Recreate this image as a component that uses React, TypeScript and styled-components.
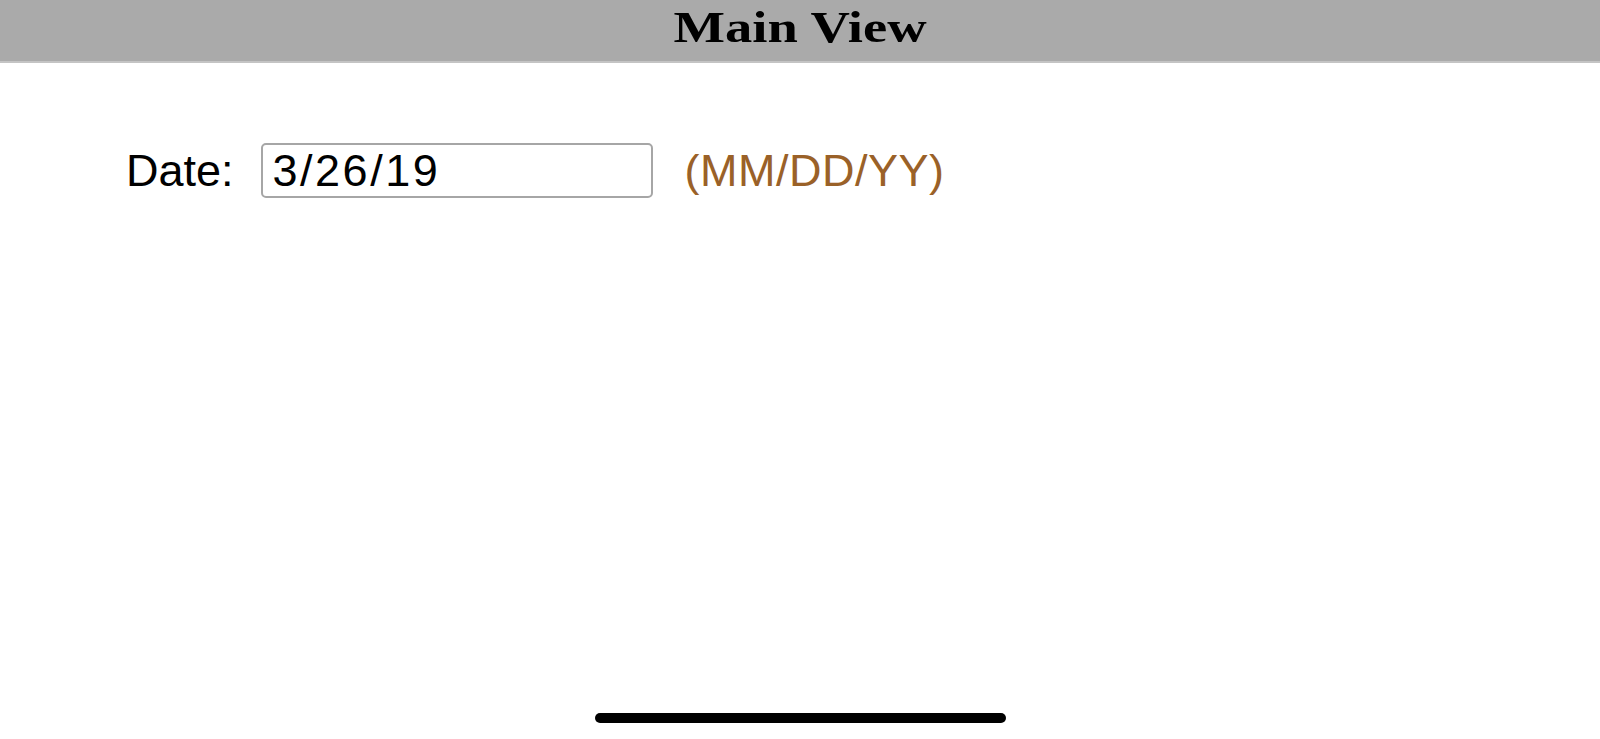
import React, { useState } from "react";
import styled, { createGlobalStyle } from "styled-components";

const GlobalStyle = createGlobalStyle`
  html, body {
    margin: 0;
    padding: 0;
    background: #ffffff;
  }
`;

function App() {
  const [date, setDate] = useState("3/26/19");

  return (
    <Screen>
      <GlobalStyle />
      <Header>
        <Title>Main View</Title>
      </Header>
      <Content>
        <Row>
          <Label htmlFor="date">Date:</Label>
          <DateInput
            id="date"
            value={date}
            onChange={(e) => setDate(e.target.value)}
          />
          <Hint>(MM/DD/YY)</Hint>
        </Row>
      </Content>
      <HomeIndicator />
    </Screen>
  );
}

const Screen = styled.div`
  width: 100%;
  height: 739px;
  display: flex;
  flex-direction: column;
  align-items: stretch;
  overflow: hidden;
`;

const Header = styled.div`
  height: 61px;
  background: #aaaaaa;
  border-bottom: 2px solid #c4c4c4;
  display: flex;
  justify-content: center;
  align-items: center;
`;

const Title = styled.h1`
  margin: 0;
  font-family: "Liberation Serif", "Times New Roman", serif;
  font-weight: 700;
  font-size: 44px;
  line-height: 61px;
  color: #000000;
  transform: scaleX(1.24);
  position: relative;
  top: -3px;
`;

const Content = styled.div`
  flex: 1;
  padding: 80px 0 0 126px;
`;

const Row = styled.div`
  display: flex;
  flex-direction: row;
  align-items: center;
`;

const Label = styled.label`
  font-family: "Liberation Sans", Arial, sans-serif;
  font-size: 45px;
  color: #000000;
  margin-right: 27px;
`;

const DateInput = styled.input`
  box-sizing: border-box;
  width: 392px;
  height: 55px;
  padding: 0 10px;
  border: 2px solid #a6a6a6;
  border-radius: 5px;
  outline: none;
  font-family: "Liberation Sans", Arial, sans-serif;
  font-size: 45px;
  letter-spacing: 2.5px;
  color: #000000;
  background: #ffffff;
`;

const Hint = styled.span`
  font-family: "Liberation Sans", Arial, sans-serif;
  font-size: 45px;
  letter-spacing: 0.5px;
  color: #9a6128;
  margin-left: 32px;
`;

const HomeIndicator = styled.div`
  align-self: center;
  width: 411px;
  height: 10px;
  border-radius: 5px;
  background: #000000;
  margin-bottom: 16px;
`;

export default App;
